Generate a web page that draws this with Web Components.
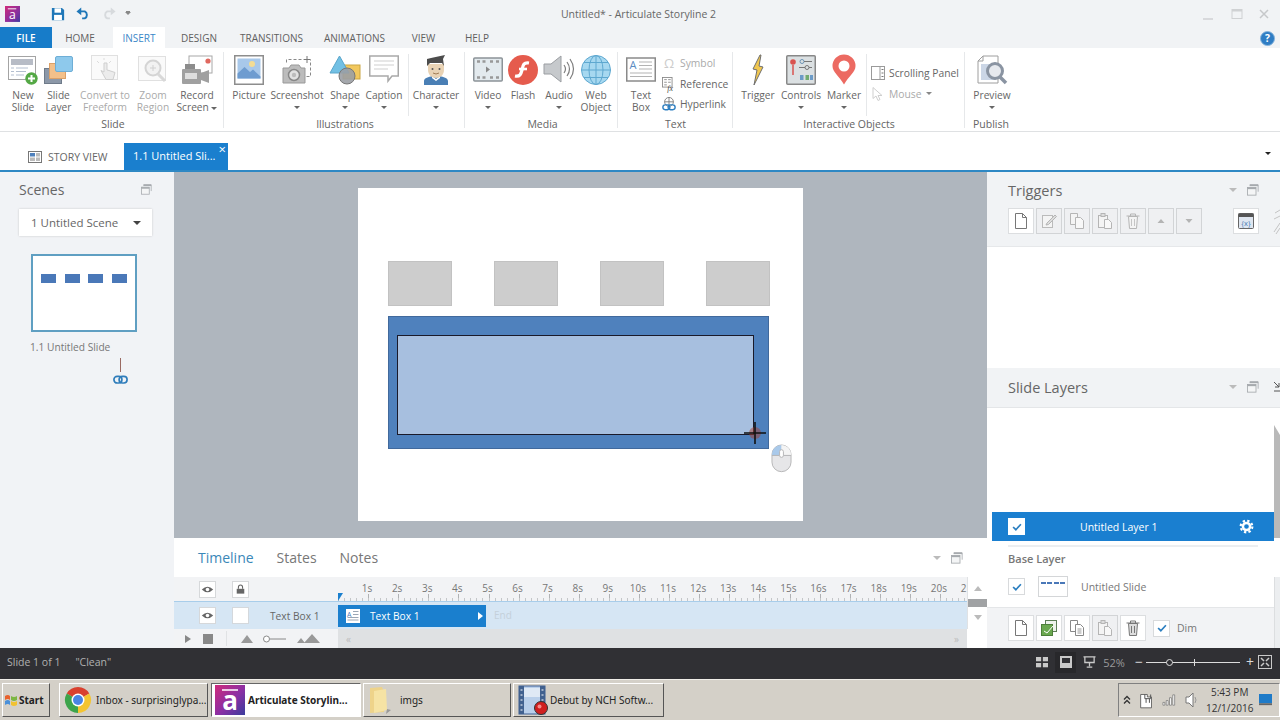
<!DOCTYPE html>
<html lang="en">
<head>
<meta charset="utf-8">
<title>Articulate Storyline 2</title>
<style>
    html, body {
        margin: 0;
        width: 1280px;
        height: 720px;
        overflow: hidden;
        font-family: "Open Sans", "Noto Sans", sans-serif;
        font-size: 11px;
        color: #606060;
    }
</style>
</head>
<body>
<sl-window>
    <sl-titlebar></sl-titlebar>
    <ribbon-tabs></ribbon-tabs>
    <sl-ribbon>
        <ribbon-group label="Slide" w="224" pad="5" lx="2">
            <ribbon-btn w="36" icon="newSlide">New<br>Slide</ribbon-btn>
            <ribbon-btn w="35" icon="slideLayer">Slide<br>Layer</ribbon-btn>
            <ribbon-btn w="58" icon="convert" off>Convert to<br>Freeform</ribbon-btn>
            <ribbon-btn w="38" icon="zoomRegion" off>Zoom<br>Region</ribbon-btn>
            <ribbon-btn w="50" icon="record">Record<br>Screen <b class="tri"></b></ribbon-btn>
        </ribbon-group>
        <ribbon-group label="Illustrations" w="241" pad="6" lx="1">
            <ribbon-btn w="38" icon="picture">Picture</ribbon-btn>
            <ribbon-btn w="58" icon="screenshot" drop>Screenshot</ribbon-btn>
            <ribbon-btn w="38" icon="shape" drop>Shape</ribbon-btn>
            <ribbon-btn w="40" icon="caption" drop>Caption</ribbon-btn>
            <ribbon-sep style="margin-left:4px"></ribbon-sep>
            <ribbon-btn w="54" icon="character" drop>Character</ribbon-btn>
        </ribbon-group>
        <ribbon-group label="Media" w="153" pad="5" lx="2">
            <ribbon-btn w="36" icon="video" drop>Video</ribbon-btn>
            <ribbon-btn w="34" icon="flash">Flash</ribbon-btn>
            <ribbon-btn w="38" icon="audio" drop>Audio</ribbon-btn>
            <ribbon-btn w="36" icon="web">Web<br>Object</ribbon-btn>
        </ribbon-group>
        <ribbon-group label="Text" w="115" pad="5">
            <ribbon-btn w="36" icon="textBox">Text<br>Box</ribbon-btn>
            <ribbon-col top="5" row="20.5" style="margin-left:3px">
                <ribbon-mini icon="symbol" off>Symbol</ribbon-mini>
                <ribbon-mini icon="reference">Reference</ribbon-mini>
                <ribbon-mini icon="hyperlink">Hyperlink</ribbon-mini>
            </ribbon-col>
        </ribbon-group>
        <ribbon-group label="Interactive Objects" w="232" pad="3">
            <ribbon-btn w="44" icon="trigger">Trigger</ribbon-btn>
            <ribbon-btn w="42" icon="controls" drop>Controls</ribbon-btn>
            <ribbon-btn w="44" icon="marker" drop>Marker</ribbon-btn>
            <ribbon-sep></ribbon-sep>
            <ribbon-col top="14" row="21" style="margin-left:4px">
                <ribbon-mini icon="scrolling">Scrolling Panel</ribbon-mini>
                <ribbon-mini icon="mouse" off>Mouse <b class="tri" style="margin-left:5px"></b></ribbon-mini>
            </ribbon-col>
        </ribbon-group>
        <ribbon-group label="Publish" w="52" pad="2" flat>
            <ribbon-btn w="50" icon="preview" drop>Preview</ribbon-btn>
        </ribbon-group>
    </sl-ribbon>
    <doc-tabs></doc-tabs>
    <sl-main>
        <scenes-panel></scenes-panel>
        <sl-center>
            <slide-stage></slide-stage>
            <timeline-panel></timeline-panel>
        </sl-center>
        <side-panel></side-panel>
    </sl-main>
    <status-bar></status-bar>
    <task-bar>
        <task-item w="48" start>Start</task-item>
        <task-item w="149" gap="9" icon="chrome" pad="4" tx="4">Inbox - surprisinglypa...</task-item>
        <task-item w="150" gap="3" icon="artic" pad="3" tx="3" size="30" active>Articulate Storylin...</task-item>
        <task-item w="148" gap="2" icon="folder" pad="4" tx="8" size="30">imgs</task-item>
        <task-item w="151" gap="2" icon="debut" pad="4" tx="2" size="30">Debut by NCH Softw...</task-item>
    </task-bar>
</sl-window>

<script>
// every icon is [viewBox width, viewBox height, markup]
const ICONS = {
    newSlide: [30, 30, '<rect x=".5" y="1.5" width="27" height="23" fill="#fff" stroke="#a4a4a4"/><rect x="3" y="4" width="22" height="6" fill="#b7bcc6"/><path d="M3 13h3M3 16.5h3M3 20h3M8 13h12M8 16.5h10M8 20h8" stroke="#b4bfd0"/><circle cx="23.5" cy="23.5" r="6.2" fill="#54a845"/><path d="M23.5 20v7M20 23.5h7" stroke="#fff" stroke-width="2"/>'],
    slideLayer: [30, 30, '<rect x=".5" y="13.5" width="17" height="15" fill="#8c98a8" stroke="#6f7b8a"/><rect x="5.5" y="8.5" width="16" height="15" fill="#f3c08a" stroke="#dca168"/><rect x="11.5" y="1.5" width="17" height="15" rx="1.5" fill="#8ec9ec" stroke="#6eaed6"/>'],
    convert: [30, 30, '<rect x="1.5" y=".5" width="26" height="24" fill="#fafafa" stroke="#e0e0e0"/><path d="M14 8v9l-3-1.5 5 9h7l2-7-6-2-2-.5V8z" fill="#ececec" stroke="#cfcfcf"/><path d="M7 6l2 2M21 6l-2 2M14 3v2" stroke="#dcdcdc"/>'],
    zoomRegion: [30, 30, '<rect x=".5" y="1.5" width="27" height="24" fill="#fafafa" stroke="#e0e0e0"/><circle cx="15" cy="13" r="7.5" fill="#f2f2f2" stroke="#d4d4d4" stroke-width="2"/><path d="M15 10v6M12 13h6" stroke="#d0d0d0"/><path d="M20 19l7 7" stroke="#d8d8d8" stroke-width="3"/>'],
    record: [32, 30, '<rect x="8" y="1" width="23" height="17" fill="#fff" stroke="#a8a8a8"/><circle cx="27" cy="6" r="2.6" fill="#e0685f"/><rect x="1" y="14" width="19" height="15" rx="1" fill="#a0a0a0"/><rect x="4" y="18" width="12" height="6" fill="#dedede"/><path d="M20 18l8-3v13l-8-3z" fill="#a0a0a0"/><rect x="4" y="9" width="10" height="5" fill="#8c8c8c"/>'],
    picture: [30, 30, '<rect x=".75" y=".75" width="28.5" height="28.5" fill="#fff" stroke="#8d8d8d" stroke-width="1.5"/><rect x="3.5" y="3.5" width="23" height="20" fill="#a8c8ea"/><circle cx="18" cy="9" r="3" fill="#f4dc93"/><path d="M3.5 23.5v-5l7-6.5 5.5 5 3-2.5 7.5 7v2z" fill="#6e9cd0"/>'],
    screenshot: [32, 30, '<path d="M5.5 7.5v-3h24v17h-4" fill="none" stroke="#888" stroke-dasharray="3 2"/><path d="M26 1v7M23 4.500h6" stroke="#777"/><path d="M2 13h6l2-3h8l2 3h4v15H2z" fill="#bcbcbc" stroke="#999"/><circle cx="13" cy="20" r="5.500" fill="#e2e2e2" stroke="#888" stroke-width="1.500"/><circle cx="13" cy="20" r="2.200" fill="#bcbcbc"/>'],
    shape: [30, 30, '<rect x="13" y="10" width="17" height="14" fill="#f2c85e" stroke="#c9a544"/><path d="M9.500 1L19 18H0z" fill="#72c0e4" stroke="#5aa6cb"/><circle cx="17" cy="21" r="8" fill="#9b9fa4" fill-opacity=".9" stroke="#777"/>'],
    caption: [30, 30, '<path d="M.75 1h28.500v20H23l-4 5v-5H.75z" fill="#fff" stroke="#a9a9a9" stroke-width="1.500"/><path d="M5 6h20M5 10h20M5 14h14" stroke="#cfcfcf"/>'],
    character: [30, 30, '<path d="M3 30v-4c0-3 5-4 8-5h8c3 1 8 2 8 5v4z" fill="#4a7fb5"/><path d="M11 21l4 3 4-3v2l-4 3-4-3z" fill="#fff"/><path d="M7 9h16v6c0 5-4 8-8 8s-8-3-8-8z" fill="#e9d3b5"/><path d="M6 11V4l4-1 14-3-2 4 1 7-2-3H9z" fill="#4c4c4c"/><circle cx="11.500" cy="14" r="1" fill="#555"/><circle cx="18.500" cy="14" r="1" fill="#555"/><path d="M12 18q3 2 6 0" stroke="#a27d55" fill="none"/>'],
    video: [30, 30, '<rect x=".75" y="3" width="28.500" height="23" rx="1" fill="#e3eaee" stroke="#8c9398" stroke-width="1.500"/><path d="M4 6.500h3M9.500 6.500h3M17 6.500h3M23 6.500h3M4 22.500h3M9.500 22.500h3M17 22.500h3M23 22.500h3" stroke="#999" stroke-width="2.500"/><path d="M13 11.500l4 3-4 3z" fill="#888"/>'],
    flash: [30, 30, '<circle cx="15" cy="15" r="15" fill="#e55b4d"/><path d="M21 8c-6-1-6 3-7 7s-2 7-7 6" fill="none" stroke="#fff" stroke-width="3.200"/><path d="M11 14h8" stroke="#fff" stroke-width="2.600"/>'],
    audio: [32, 30, '<path d="M1 9h7l10-8v26L8 19H1z" fill="#c6c9cc" stroke="#9b9ea2"/><path d="M21 10q3 4 0 8M24 7q5 7 0 14M27 4q7 10 0 20" fill="none" stroke="#7d7d7d" stroke-width="1.200"/>'],
    web: [30, 30, '<circle cx="15" cy="15" r="14.500" fill="#a6d8f0" stroke="#5ea8d0"/><ellipse cx="15" cy="15" rx="7" ry="14.500" fill="none" stroke="#5ea8d0"/><path d="M15 .5v29M.5 15h29M3 7.500h24M3 22.500h24" stroke="#5ea8d0" fill="none"/>'],
    textBox: [30, 30, '<rect x=".75" y="3" width="28.500" height="23" fill="#fff" stroke="#8a8a8a" stroke-width="1.500"/><text x="3.500" y="14" font-size="11" font-family="Open Sans" fill="#5b8cc2">A</text><path d="M13 7h13M13 10.500h13M13 14h13M4 18h22M4 21.500h22" stroke="#b3b3b3"/>'],
    trigger: [30, 30, '<path d="M17 0l-7 14 4 1-3 15 9-18-4-1 2-11z" fill="#f1c74f" stroke="#6f6f6f"/>'],
    controls: [30, 30, '<rect x=".75" y=".75" width="28.500" height="28.500" rx="1" fill="#dbe0e2" stroke="#888" stroke-width="1.500"/><circle cx="7" cy="7" r="2.800" fill="#d9534f"/><path d="M7 10v10" stroke="#d9534f" stroke-width="1.500"/><circle cx="16" cy="6.500" r="2" fill="none" stroke="#6b93b4"/><path d="M18 6.500h8M13 12.500h13" stroke="#777"/><circle cx="21" cy="12.500" r="2" fill="#dbe0e2" stroke="#777"/><rect x="14" y="20" width="3.500" height="5" fill="#6c9bc7"/><rect x="19.500" y="20" width="3.500" height="5" fill="#72ab70"/><rect x="24" y="20" width="3" height="5" fill="#6c9bc7"/>'],
    marker: [24, 30, '<path d="M12 29.500C7 21 .5 17 .5 11a11.500 11.500 0 0 1 23 0c0 6-6.500 10-11.500 18.500z" fill="#ec6a62"/><circle cx="12" cy="11" r="5.500" fill="#fff"/>'],
    preview: [30, 30, '<path d="M1 6l5-5h15v27H1z" fill="#fff" stroke="#9e9e9e"/><path d="M1 6h5V1" fill="none" stroke="#9e9e9e"/><rect x="4" y="9" width="15" height="16" fill="#cbd6e6"/><circle cx="18" cy="16" r="7.500" fill="#e6e9ee" stroke="#8a94a2" stroke-width="3"/><path d="M23 22l6 6" stroke="#8a94a2" stroke-width="3.500"/>'],
    reference: [16, 16, '<rect x=".5" y=".5" width="11" height="11" fill="#fff" stroke="#888"/><path d="M2.500 3h3M7 3h3M2.500 6h3M7 6h3M2.500 9h3" stroke="#888"/><text x="6" y="15.500" font-size="9" font-style="italic" font-family="Liberation Serif" fill="#444">fx</text>'],
    hyperlink: [16, 16, '<circle cx="8" cy="5.500" r="5" fill="#fff" stroke="#777"/><path d="M3 5.500h10M8 .5v10" stroke="#777"/><rect x="1" y="9" width="8" height="5.500" rx="2.700" fill="none" stroke="#2e7fc1" stroke-width="1.600"/><rect x="7" y="9" width="8" height="5.500" rx="2.700" fill="none" stroke="#2e7fc1" stroke-width="1.600"/>'],
    scrolling: [14, 14, '<rect x=".5" y=".5" width="13" height="13" fill="#fff" stroke="#9a9a9a"/><path d="M9 .5v13" stroke="#9a9a9a"/><path d="M10.500 3.500h2M10.500 7h2M10.500 10.500h2" stroke="#777"/>'],
    mouse: [12, 14, '<path d="M1 .5v11l3-2.500 2 4.500 2-1-2-4h4z" fill="#fff" stroke="#cfcfcf"/>'],
    restore: [14, 14, '<path d="M3.500 1h9.500v8" fill="none" stroke="#a6aaae"/><rect x="3" y=".5" width="10" height="2" fill="#a6aaae"/><rect x=".5" y="4" width="10" height="9" fill="#f4f5f6" stroke="#a6aaae"/><rect x=".5" y="4" width="10" height="2" fill="#a6aaae"/>'],
    doc: [16, 16, '<path d="M2.500 .5h7l4 4v11h-11z" fill="#fff" stroke="#777"/><path d="M9.500 .5v4h4" fill="none" stroke="#777"/>'],
    edit: [16, 16, '<rect x="1.500" y="2.500" width="10" height="12" fill="#f4f4f4" stroke="#bbb"/><path d="M6 10l8-8 1.500 1.500-8 8L5 12z" fill="#ddd" stroke="#b5b5b5"/>'],
    copy: [16, 16, '<path d="M1.500 .5h7v11h-7z" fill="#f4f4f4" stroke="#b5b5b5"/><path d="M6.500 4.500h5l3 3v8h-8z" fill="#f8f8f8" stroke="#b5b5b5"/>'],
    copyOn: [16, 16, '<path d="M1.500 .5h7v11h-7z" fill="#fff" stroke="#888"/><path d="M6.500 4.500h5l3 3v8h-8z" fill="#fff" stroke="#888"/><path d="M8.500 9h4M8.500 11h4M8.500 13h4" stroke="#999"/>'],
    paste: [16, 16, '<rect x="1.500" y="2.500" width="9" height="12" fill="#f4f4f4" stroke="#b5b5b5"/><rect x="4" y=".5" width="4" height="3" fill="#ddd" stroke="#b5b5b5"/><path d="M7.500 6.500h4l3 3v6h-7z" fill="#f8f8f8" stroke="#b5b5b5"/>'],
    trash: [16, 16, '<path d="M1.500 3h13M5.500 3V1h5v2" fill="none" stroke="#b5b5b5"/><path d="M3.500 3.500l1 12h7l1-12z" fill="#f4f4f4" stroke="#b5b5b5"/><path d="M6.500 6v7M9.500 6v7" stroke="#c5c5c5"/>'],
    trashOn: [16, 16, '<path d="M1.500 3h13M5.500 3V1h5v2" fill="none" stroke="#777"/><path d="M3.500 3.500l1 12h7l1-12z" fill="#ddd" stroke="#777"/><path d="M6.500 6v7M9.500 6v7" stroke="#777"/>'],
    dup: [16, 16, '<rect x="4.500" y=".5" width="11" height="11" fill="#eef3ec" stroke="#5e7f57"/><rect x=".5" y="4.500" width="11" height="11" fill="#6aa84f" stroke="#4d7f3a"/><path d="M3 11l3 2 6-7" stroke="#fff" fill="none"/>'],
    arrowUp: [16, 16, '<path d="M4.500 10l3.500-4 3.500 4z" fill="#b4b4b4"/>'],
    arrowDown: [16, 16, '<path d="M4.500 6l3.500 4 3.500-4z" fill="#b4b4b4"/>'],
    vars: [16, 16, '<rect x=".5" y=".5" width="15" height="15" rx="1" fill="#dfe6f0" stroke="#666"/><rect x=".5" y=".5" width="15" height="3.500" fill="#555"/><text x="8" y="12.500" font-size="7.500" text-anchor="middle" font-family="Open Sans" fill="#4a7fb5">{x}</text>'],
    cut: [6, 26, '<path d="M1 5l5-3M0 11l6-3M0 24l6-9M2 26l4-6" stroke="#c4c4c4"/>'],
    pin: [6, 12, '<path d="M0 1l5 5M5 2v4H1M0 10h6" fill="none" stroke="#555"/>'],
    eye: [16, 16, '<path d="M1 8q7-7 14 0q-7 7-14 0z" fill="#666"/><circle cx="8" cy="8" r="2.200" fill="#fff"/>'],
    lock: [16, 16, '<rect x="2.500" y="7" width="11" height="7" fill="#666"/><path d="M5 7V4.500a3 3 0 0 1 6 0V7" fill="none" stroke="#666" stroke-width="1.600"/>'],
    gear: [18, 18, '<circle cx="9" cy="9" r="4.300" fill="none" stroke="#fff" stroke-width="3"/><circle cx="9" cy="9" r="7" fill="none" stroke="#fff" stroke-width="2.600" stroke-dasharray="2.800 2.700"/>'],
    check: [18, 18, '<path d="M4 9l3.500 3.500L14 5.500" fill="none" stroke="#2c7fc0" stroke-width="2.200"/>'],
    link: [16, 10, '<rect x="1" y="1.500" width="8.500" height="7" rx="3.400" fill="none" stroke="#2f7dbb" stroke-width="1.800"/><rect x="6.500" y="1.500" width="8.500" height="7" rx="3.400" fill="none" stroke="#2f7dbb" stroke-width="1.800"/>'],
    storyView: [14, 12, '<rect x=".5" y=".5" width="13" height="11" fill="#fff" stroke="#777"/><rect x="2" y="2" width="5" height="3.500" fill="#4f81bd"/><rect x="8" y="2" width="4" height="3.500" fill="#bbb"/><rect x="2" y="6.500" width="5" height="3.500" fill="#bbb"/><rect x="8" y="6.500" width="4" height="3.500" fill="#bbb"/>'],
    textItem: [14, 14, '<rect width="14" height="14" fill="#fff"/><text x="1" y="7.500" font-size="7" font-family="Open Sans" fill="#4f81bd">A</text><path d="M7 2.500h5.500M7 5.500h5.500M1.500 8.500h11M1.500 11h11" stroke="#9aa7b5"/>'],
    save: [16, 16, '<path d="M1 1h11.500L15 3.500V15H1z" fill="#1f77b8"/><rect x="4" y="1.500" width="7.500" height="5" fill="#fff"/><rect x="3.500" y="9" width="9" height="6" fill="#fff"/>'],
    undo: [16, 14, '<path d="M4 5h6a4.500 4.500 0 0 1 0 8H7" fill="none" stroke="#1f77b8" stroke-width="2.200"/><path d="M6 .5v9L.5 5z" fill="#1f77b8"/>'],
    redo: [16, 14, '<path d="M12 5H6a4.500 4.500 0 0 0 0 8h3" fill="none" stroke="#d7dadd" stroke-width="2.200"/><path d="M10 .5v9L15.500 5z" fill="#d7dadd"/>'],
    minimize: [12, 12, '<path d="M1 11h10" stroke="#cfd1d3" stroke-width="1.500"/>'],
    maximize: [12, 12, '<rect x="1" y="1.500" width="10" height="9" fill="none" stroke="#cfd1d3"/><path d="M1 2.500h10" stroke="#cfd1d3" stroke-width="2"/>'],
    close: [12, 12, '<path d="M2 2l8 8M10 2l-8 8" stroke="#c6c8ca" stroke-width="1.500"/>'],
    help: [16, 16, '<circle cx="8" cy="8" r="7.500" fill="#2f7dc4"/><circle cx="8" cy="8" r="7.500" fill="none" stroke="#86b4dc"/><text x="8" y="12" text-anchor="middle" font-size="11" font-weight="700" font-family="Open Sans" fill="#fff">?</text>'],
    appLogo: [16, 17, '<defs><linearGradient id="lg" x1="0" y1="0" x2="1" y2="1"><stop offset="0" stop-color="#d02a7a"/><stop offset=".6" stop-color="#8a2f9e"/><stop offset="1" stop-color="#3f3aa0"/></linearGradient></defs><rect width="16" height="17" fill="url(#lg)"/><path d="M3 3h9" stroke="#fff"/><text x="8" y="14" text-anchor="middle" font-size="13" font-family="Open Sans" fill="#fff">a</text>'],
    chrome: [28, 28, '<path d="M14 14L2.740 7.500A13 13 0 0 1 25.260 7.500z" fill="#d9412f"/><path d="M14 14L25.260 7.500A13 13 0 0 1 14 27z" fill="#f4c430"/><path d="M14 14L14 27A13 13 0 0 1 2.740 7.500z" fill="#3da44b"/><circle cx="14" cy="14" r="6.500" fill="#fff"/><circle cx="14" cy="14" r="5" fill="#4a85e4"/>'],
    artic: [30, 30, '<defs><linearGradient id="la" x1="0" y1="0" x2="1" y2="1"><stop offset="0" stop-color="#d02a7a"/><stop offset=".55" stop-color="#8a2fa5"/><stop offset="1" stop-color="#3a3d9c"/></linearGradient></defs><rect width="30" height="30" fill="url(#la)"/><path d="M7 5h16" stroke="#fff" stroke-width="1.500"/><text x="15" y="25" text-anchor="middle" font-size="26" font-family="Open Sans" fill="#fff">a</text>'],
    folder: [24, 30, '<path d="M2 3l12-1 2 5v20l-14 1z" fill="#eed38a"/><path d="M6 6l12-2 1 21-13 3z" fill="#f6e3a4"/><path d="M19 24l4 1-5 4z" fill="#9a9a9a"/>'],
    debut: [30, 30, '<rect x="1" y="1" width="26" height="28" fill="#b9cfea" stroke="#3d5f94"/><rect x="1" y="1" width="5" height="28" fill="#41618f"/><rect x="22" y="1" width="5" height="28" fill="#41618f"/><path d="M2.500 5h2M2.500 10h2M2.500 15h2M2.500 20h2M2.500 25h2M23.500 5h2M23.500 10h2M23.500 15h2" stroke="#fff"/><path d="M6 3h16v9H6z" fill="#dfe9f5"/><circle cx="23" cy="23" r="6.500" fill="#d01f1f" stroke="#333"/><circle cx="21.500" cy="21.500" r="2" fill="#f68a8a"/>'],
    startFlag: [14, 14, '<path d="M1 3q3-2 5 0v4q-2-2-5 0z" fill="#e8622d"/><path d="M7 3q3 2 6 0v4q-3 2-6 0z" fill="#7db743"/><path d="M1 8q3-2 5 0v4q-2-2-5 0z" fill="#4a90d9"/><path d="M7 8q3 2 6 0v4q-3 2-6 0z" fill="#f1c232"/>'],
    chevrons: [8, 10, '<path d="M1 4.500l3-3 3 3M1 8.500l3-3 3 3" fill="none" stroke="#333" stroke-width="1.300"/>'],
    plug: [18, 20, '<path d="M2 3h8v3h5v13H2z" fill="#fff" stroke="#555"/><path d="M7 3v5h7V3M8.500 8v5M12.500 8v5" fill="none" stroke="#555" stroke-width="1.200"/>'],
    signal: [16, 14, '<path d="M1 13h2v-3H1zM4.500 13h2V8h-2zM8 13h2V5H8zM11.500 13h2V2h-2z" fill="#fff" stroke="#777" stroke-width=".8"/>'],
    speaker: [12, 16, '<path d="M1 5h3l4-4v14l-4-4H1z" fill="#fff" stroke="#777"/><path d="M10 5q2 3 0 6" fill="none" stroke="#999"/>'],
    desktop: [14, 14, '<rect width="14" height="10" fill="#1f7bc8"/><rect y="10" width="14" height="2" fill="#666"/>'],
    gridView: [14, 12, '<rect width="6" height="5" fill="#c9c9c9"/><rect x="8" width="6" height="5" fill="#c9c9c9"/><rect y="7" width="6" height="5" fill="#c9c9c9"/><rect x="8" y="7" width="6" height="5" fill="#c9c9c9"/>'],
    slideView: [12, 12, '<rect width="12" height="12" fill="#c9c9c9"/><rect x="2" y="2" width="8" height="5" fill="#303034"/>'],
    present: [14, 13, '<path d="M.5 1h13M2 1v6h10V1M7 7v4M4 12h6" fill="none" stroke="#c9c9c9" stroke-width="1.400"/>'],
    fit: [14, 14, '<rect x=".5" y=".5" width="13" height="13" fill="none" stroke="#c9c9c9"/><path d="M3 3l3 3M11 3L8 6M3 11l3-3M11 11L8 8" stroke="#c9c9c9" stroke-width="1.500"/>'],
    mouseHint: [22, 30, '<rect x="1" y="1" width="20" height="28" rx="10" fill="#e6e6e8" stroke="#b4b4b6"/><path d="M11 1A10 10 0 0 0 1 11v1h10z" fill="#a9c9ea"/><path d="M11 1A10 10 0 0 1 21 11v1H11z" fill="#f4f4f4"/><path d="M1 12h20" stroke="#b4b4b6"/><rect x="9" y="6" width="4" height="8" rx="2" fill="#fff" stroke="#b4b4b6"/>'],
    crosshair: [28, 28, '<circle cx="14" cy="14" r="6" fill="#a84030" fill-opacity=".5"/><path d="M14 3v22M3 14h22" stroke="#111" stroke-width="1.600"/>']
}

customElements.define('ui-icon',
    class extends HTMLElement {
        connectedCallback () {
            const [vw, vh, body] = ICONS[this.getAttribute('name')]
            const w = this.getAttribute('w') || vw
            const h = this.getAttribute('h') || (w * vh / vw)
            if (!this.shadowRoot) this.attachShadow({ mode: 'open' })
            this.shadowRoot.innerHTML = `
                <style>
                    :host { display: inline-flex; flex: none; }
                    svg { display: block; overflow: visible; }
                </style>
                <svg xmlns="http://www.w3.org/2000/svg" width="${w}" height="${h}" viewBox="0 0 ${vw} ${vh}">${body}</svg>`
        }
    }
)

customElements.define('sl-window',
    class extends HTMLElement {
        constructor () {
            super()
            this.attachShadow({ mode: 'open' }).innerHTML = `
                <style>
                    :host { display: flex; flex-direction: column; width: 1280px; height: 720px; background: #fff; }
                </style>
                <slot></slot>`
        }
    }
)

customElements.define('sl-titlebar',
    class extends HTMLElement {
        constructor () {
            super()
            this.attachShadow({ mode: 'open' }).innerHTML = `
                <style>
                    :host { display: grid; grid-template-columns: 1fr auto 1fr; height: 27px; background: #f1f3f5; align-items: center; }
                    .left { display: flex; align-items: center; padding-left: 5px; }
                    .right { display: flex; align-items: center; justify-content: flex-end; padding: 0 10px 0 0; }
                    .title { font-size: 10.500px; color: #666; margin-right: 3px; }
                    .cust { width: 0; height: 0; border: 3px solid transparent; border-top-color: #888; border-bottom: 0; margin-left: 10px; box-shadow: 0 -2px 0 -1px #888; }
                </style>
                <div class="left">
                    <ui-icon name="appLogo" w="15"></ui-icon>
                    <ui-icon name="save" w="14" style="margin-left:31px"></ui-icon>
                    <ui-icon name="undo" w="14" style="margin-left:11px"></ui-icon>
                    <ui-icon name="redo" w="14" style="margin-left:12px"></ui-icon>
                    <span class="cust" style="margin-left:9px"></span>
                </div>
                <div class="title">Untitled* -  Articulate Storyline 2</div>
                <div class="right">
                    <ui-icon name="minimize"></ui-icon>
                    <ui-icon name="maximize" style="margin-left:17px"></ui-icon>
                    <ui-icon name="close" style="margin-left:15px"></ui-icon>
                </div>`
        }
    }
)

customElements.define('ribbon-tabs',
    class extends HTMLElement {
        constructor () {
            super()
            const tabs = [['HOME', 56], ['INSERT', 52, 5], ['DESIGN', 68], ['TRANSITIONS', 77], ['ANIMATIONS', 89], ['VIEW', 49], ['HELP', 58]]
            const html = tabs.map(([t, w, m]) => `<div class="tab ${t === 'INSERT' ? 'on' : ''}" style="width:${w}px;margin-left:${m || 0}px">${t}</div>`).join('')
            this.attachShadow({ mode: 'open' }).innerHTML = `
                <style>
                    :host { display: flex; height: 21px; background: #f1f3f5; font-size: 10px; color: #606060; }
                    .tab { display: flex; align-items: center; justify-content: center; }
                    .tab.on { background: #fff; color: #3a87c8; }
                    .file { width: 52px; display: flex; align-items: center; justify-content: center; background: #177cc9; color: #fff; font-weight: 600; }
                    ui-icon { margin: 4px 5px 0 auto; }
                </style>
                <div class="file">FILE</div>${html}
                <ui-icon name="help" w="15"></ui-icon>`
        }
    }
)

customElements.define('sl-ribbon',
    class extends HTMLElement {
        constructor () {
            super()
            this.attachShadow({ mode: 'open' }).innerHTML = `
                <style>
                    :host { display: flex; height: 84px; background: #fff; box-sizing: border-box; border-bottom: 1px solid #dfe1e3; }
                </style>
                <slot></slot>`
        }
    }
)

customElements.define('ribbon-group',
    class extends HTMLElement {
        constructor () {
            super()
            const flat = this.hasAttribute('flat')
            this.attachShadow({ mode: 'open' }).innerHTML = `
                <style>
                    :host { display: flex; flex-direction: column; box-sizing: border-box; width: ${this.getAttribute('w')}px; flex: none; position: relative; }
                    :host::after { content: ""; position: absolute; right: 0; top: 4px; bottom: 3px; width: 1px; background: ${flat ? 'transparent' : '#e6e8ea'}; }
                    .row { display: flex; height: 69px; padding-left: ${this.getAttribute('pad')}px; }
                    .label { height: 14px; line-height: 14px; text-align: center; font-size: 10.500px; color: #646464; padding-left: ${this.getAttribute('lx') || 0}px; }
                </style>
                <div class="row"><slot></slot></div>
                <div class="label">${this.getAttribute('label')}</div>`
        }
    }
)

customElements.define('ribbon-btn',
    class extends HTMLElement {
        constructor () {
            super()
            const off = this.hasAttribute('off')
            const drop = this.hasAttribute('drop')
            this.attachShadow({ mode: 'open' }).innerHTML = `
                <style>
                    :host { display: flex; flex-direction: column; align-items: center; flex: none; width: ${this.getAttribute('w')}px; padding-top: 7px; box-sizing: border-box; }
                    .ico { height: 30px; display: flex; align-items: center; justify-content: center; }
                    .txt { margin-top: 4px; font-size: 10.200px; line-height: 12px; text-align: center; white-space: nowrap; color: ${off ? '#aaa' : '#666'}; }
                    .tri { display: block; width: 0; height: 0; border: 3px solid transparent; border-top-color: #666; border-bottom: 0; margin-top: 5px; }
                    ::slotted(b) { display: inline-block; width: 0; height: 0; border: 3px solid transparent; border-top-color: #666; border-bottom: 0; vertical-align: 1px; }
                </style>
                <div class="ico"><ui-icon name="${this.getAttribute('icon')}" h="30" w="${ICONS[this.getAttribute('icon')][0]}"></ui-icon></div>
                <div class="txt"><slot></slot></div>
                ${drop ? '<span class="tri"></span>' : ''}`
        }
    }
)

customElements.define('ribbon-sep',
    class extends HTMLElement {
        constructor () {
            super()
            this.attachShadow({ mode: 'open' }).innerHTML = `
                <style>
                    :host { display: block; flex: none; width: 1px; height: 62px; margin-top: 6px; background: #e6e8ea; }
                </style>`
        }
    }
)

customElements.define('ribbon-col',
    class extends HTMLElement {
        constructor () {
            super()
            this.attachShadow({ mode: 'open' }).innerHTML = `
                <style>
                    :host { display: grid; grid-auto-rows: ${this.getAttribute('row')}px; align-content: start; padding-top: ${this.getAttribute('top')}px; }
                </style>
                <slot></slot>`
        }
    }
)

customElements.define('ribbon-mini',
    class extends HTMLElement {
        constructor () {
            super()
            const name = this.getAttribute('icon')
            const glyph = name === 'symbol'
                ? '<span class="omega">Ω</span>'
                : `<ui-icon name="${name}" w="${name === 'mouse' ? 12 : 14}"></ui-icon>`
            const off = this.hasAttribute('off')
            this.attachShadow({ mode: 'open' }).innerHTML = `
                <style>
                    :host { display: flex; align-items: center; white-space: nowrap; font-size: 10.300px; color: ${off ? '#aaa' : '#666'}; }
                    .slot { width: 14px; display: flex; justify-content: center; margin-right: 4px; }
                    .omega { font-size: 13px; line-height: 14px; color: #ccc; }
                    ::slotted(b) { display: inline-block; width: 0; height: 0; border: 3px solid transparent; border-top-color: #888; border-bottom: 0; vertical-align: 1px; }
                </style>
                <span class="slot">${glyph}</span><slot></slot>`
        }
    }
)

customElements.define('doc-tabs',
    class extends HTMLElement {
        constructor () {
            super()
            this.attachShadow({ mode: 'open' }).innerHTML = `
                <style>
                    :host { display: flex; align-items: flex-end; height: 40px; background: #fff; box-sizing: border-box; border-bottom: 2px solid #2e88c4; position: relative; }
                    .story { display: flex; align-items: center; width: 124px; height: 27px; box-sizing: border-box; padding-left: 28px; gap: 6px; font-size: 10.500px; color: #666; }
                    .tab { width: 104px; height: 27px; box-sizing: border-box; padding-left: 9px; background: #1a7fce; color: #fff; font-size: 11px; line-height: 26px; position: relative; }
                    .x { position: absolute; right: 2px; top: 0; font-size: 13px; line-height: 12px; }
                    .more { position: absolute; right: 9px; top: 20px; width: 0; height: 0; border: 3px solid transparent; border-top-color: #222; border-bottom: 0; }
                </style>
                <div class="story"><ui-icon name="storyView"></ui-icon>STORY VIEW</div>
                <div class="tab">1.1 Untitled Sli...<span class="x">×</span></div>
                <span class="more"></span>`
        }
    }
)

customElements.define('sl-main',
    class extends HTMLElement {
        constructor () {
            super()
            this.attachShadow({ mode: 'open' }).innerHTML = `
                <style>
                    :host { display: flex; height: 476px; }
                </style>
                <slot></slot>`
        }
    }
)

customElements.define('sl-center',
    class extends HTMLElement {
        constructor () {
            super()
            this.attachShadow({ mode: 'open' }).innerHTML = `
                <style>
                    :host { display: flex; flex-direction: column; width: 813px; flex: none; }
                </style>
                <slot></slot>`
        }
    }
)

customElements.define('scenes-panel',
    class extends HTMLElement {
        constructor () {
            super()
            this.attachShadow({ mode: 'open' }).innerHTML = `
                <style>
                    :host { display: block; width: 174px; flex: none; box-sizing: border-box; background: #f1f3f6; padding: 8px 22px 0 19px; }
                    .head { display: flex; justify-content: space-between; align-items: center; height: 18px; font-size: 14px; color: #666; }
                    .select { display: flex; justify-content: space-between; align-items: center; box-sizing: border-box; width: 133px; height: 27px; margin-top: 11px; padding: 0 11px 0 12px; background: #fff; box-shadow: 0 0 2px #c8c8c8; font-size: 11.500px; color: #666; }
                    .select i { width: 0; height: 0; border: 4px solid transparent; border-top-color: #444; border-bottom: 0; }
                    .thumb { display: flex; justify-content: space-between; box-sizing: border-box; width: 106px; height: 78px; margin: 18px 0 0 12px; padding: 18px 8px 0 8px; background: #fff; border: 2px solid #5f9fc2; }
                    .thumb i { width: 15px; height: 9px; background: #4a78b8; }
                    .name { margin: 9px 0 0 11px; font-size: 10.200px; line-height: 13px; color: #777; }
                    .wire { width: 1px; height: 14px; margin: 4px 0 0 101px; background: #9a6a62; }
                    .link { display: flex; margin: 3px 0 0 94px; }
                </style>
                <div class="head">Scenes<ui-icon name="restore" w="11"></ui-icon></div>
                <div class="select">1 Untitled Scene<i></i></div>
                <div class="thumb"><i></i><i></i><i></i><i></i></div>
                <div class="name">1.1 Untitled Slide</div>
                <div class="wire"></div>
                <div class="link"><ui-icon name="link" w="15"></ui-icon></div>`
        }
    }
)

customElements.define('slide-stage',
    class extends HTMLElement {
        constructor () {
            super()
            this.attachShadow({ mode: 'open' }).innerHTML = `
                <style>
                    :host { display: flex; align-items: center; justify-content: center; height: 366px; box-sizing: border-box; padding-bottom: 1px; flex: none; background: #afb6be; }
                    .slide { position: relative; width: 445px; height: 333px; background: #fff; }
                    .ph { position: absolute; top: 73px; width: 64px; height: 45px; box-sizing: border-box; background: #cdcdcd; border: 1px solid #c2c2c2; }
                    .blue { position: absolute; left: 30px; top: 128px; width: 381px; height: 133px; box-sizing: border-box; background: #4f81bd; border: 1px solid #41699c; }
                    .inner { position: absolute; left: 39px; top: 147px; width: 357px; height: 100px; box-sizing: border-box; background: #a7bfdf; border: 1px solid #1a1a2a; }
                    .cross { position: absolute; left: 383px; top: 231px; }
                    .hint { position: absolute; left: 413px; top: 256px; }
                </style>
                <div class="slide">
                    <div class="ph" style="left:30px"></div>
                    <div class="ph" style="left:136px"></div>
                    <div class="ph" style="left:242px"></div>
                    <div class="ph" style="left:348px"></div>
                    <div class="blue"></div>
                    <div class="inner"></div>
                    <ui-icon class="cross" name="crosshair"></ui-icon>
                    <ui-icon class="hint" name="mouseHint" w="21"></ui-icon>
                </div>`
        }
    }
)

customElements.define('timeline-panel',
    class extends HTMLElement {
        constructor () {
            super()
            let labels = ''
            for (let s = 1; s <= 21; s++) labels += `<span>${s}s</span>`
            this.attachShadow({ mode: 'open' }).innerHTML = `
                <style>
                    :host { display: flex; flex-direction: column; height: 110px; flex: none; background: #fff; overflow: hidden; }
                    .head { display: flex; align-items: center; height: 39px; padding: 0 24px 0 24px; font-size: 14px; color: #777; }
                    .head .on { color: #3a87b8; }
                    .head span { margin-right: 23px; }
                    .head i { margin-left: auto; width: 0; height: 0; border: 4px solid transparent; border-top-color: #bbb; border-bottom: 0; }
                    .head ui-icon { margin-left: 10px; }
                    .grid { display: grid; grid-template-columns: 164px 629px 20px; grid-template-rows: 25px 27px 19px; }
                    .cell { display: flex; align-items: center; }
                    .bt { display: flex; align-items: center; justify-content: center; box-sizing: border-box; width: 17px; height: 17px; background: #fff; border: 1px solid #d6d8da; }
                    .a { background: #f2f3f5; padding-left: 25px; gap: 16px; border-bottom: 1px solid #a8cdea; }
                    .ruler { position: relative; background: #f2f3f5; border-bottom: 1px solid #a8cdea; overflow: hidden;
                        --t: repeating-linear-gradient(90deg, #c4c6c8 0 1px, transparent 1px 6.020px);
                        --m: repeating-linear-gradient(90deg, #b0b2b4 0 1px, transparent 1px 30.100px); }
                    .ruler::after { content: ""; position: absolute; left: 0; right: 0; bottom: 0; height: 7px; background: var(--m); }
                    .ruler::before { content: ""; position: absolute; left: 0; right: 0; bottom: 0; height: 3px; background: var(--t); z-index: 1; }
                    .labels { display: flex; position: absolute; left: 14px; top: 5px; font-size: 10px; line-height: 12px; color: #777; }
                    .labels span { width: 30.100px; flex: none; text-align: center; }
                    .play { position: absolute; left: -5px; bottom: 0; width: 0; height: 0; border: 5px solid transparent; border-top: 8px solid #1a7fce; border-bottom: 0; z-index: 2; }
                    .vs { background: #fff; border-left: 1px solid #e0e2e4; flex-direction: column; justify-content: center; }
                    .b { background: #d6e6f4; padding-left: 25px; gap: 16px; }
                    .b .name { margin-left: 5px; font-size: 10.200px; color: #666; }
                    .bt2 { box-sizing: border-box; width: 17px; height: 17px; background: #fff; border: 1px solid #d4d8dc; }
                    .track { position: relative; background: #d6e6f4; }
                    .bar { position: absolute; left: 0; top: 3px; display: flex; align-items: center; box-sizing: border-box; width: 148px; height: 22px; padding: 0 3px 0 8px; background: #1a7fce; color: #fff; font-size: 10.200px; }
                    .bar .t { margin-left: 10px; }
                    .bar i { margin-left: auto; width: 0; height: 0; border: 4px solid transparent; border-left: 5px solid #fff; border-right: 0; }
                    .end { position: absolute; left: 156px; top: 6px; font-size: 10px; color: #c4d0da; }
                    .c { background: #f2f3f5; padding-left: 11px; }
                    .c .play2 { width: 0; height: 0; border: 4px solid transparent; border-left: 6px solid #888; border-right: 0; }
                    .c .stop { width: 10px; height: 10px; background: #888; margin-left: 12px; }
                    .c .sep { width: 1px; height: 15px; background: #e0e2e4; margin-left: 13px; }
                    .c svg { margin-left: 14px; }
                    .sb { background: #dfe1e3; justify-content: space-between; padding: 0 8px; font-size: 10px; color: #bbb; }
                    .corner { background: #fff; }
                    .tri { width: 0; height: 0; border: 4px solid transparent; }
                    .thumb { width: 100%; height: 8px; background: #a0a2a4; margin: 0; }
                    .up { border-bottom: 5px solid #bbb; border-top: 0; margin-bottom: 8px; }
                    .down { border-top: 5px solid #bbb; border-bottom: 0; margin-top: 8px; }
                    .vspan { grid-row: 1 / span 2; grid-column: 3; }
                </style>
                <div class="head"><span class="on">Timeline</span><span>States</span><span>Notes</span><i></i><ui-icon name="restore" w="12"></ui-icon></div>
                <div class="grid">
                    <div class="cell a">
                        <div class="bt"><ui-icon name="eye" w="13"></ui-icon></div>
                        <div class="bt"><ui-icon name="lock" w="11"></ui-icon></div>
                    </div>
                    <div class="ruler">
                        <div class="labels">${labels}</div>
                        <span class="play"></span>
                    </div>
                    <div class="cell vs vspan">
                        <span class="tri up"></span><span class="thumb"></span><span class="tri down"></span>
                    </div>
                    <div class="cell b">
                        <div class="bt"><ui-icon name="eye" w="13"></ui-icon></div>
                        <div class="bt2"></div>
                        <span class="name">Text Box 1</span>
                    </div>
                    <div class="track">
                        <div class="bar"><ui-icon name="textItem"></ui-icon><span class="t">Text Box 1</span><i></i></div>
                        <span class="end">End</span>
                    </div>
                    <div class="cell c">
                        <span class="play2"></span><span class="stop"></span><span class="sep"></span>
                        <svg width="12" height="8" viewBox="0 0 12 8"><path d="M6 0l6 8H0z" fill="#999"/></svg>
                        <svg width="24" height="8" viewBox="0 0 24 8" style="margin-left:10px"><circle cx="3.500" cy="4" r="3" fill="#fff" stroke="#888"/><path d="M7 4h16" stroke="#888"/></svg>
                        <svg width="24" height="9" viewBox="0 0 24 9" style="margin-left:10px"><path d="M0 9l4-5 4 5zM7 9l8-9 8 9z" fill="#999"/></svg>
                    </div>
                    <div class="cell sb"><span>«</span><span>»</span></div>
                    <div class="corner"></div>
                </div>`
        }
    }
)

customElements.define('tool-btn',
    class extends HTMLElement {
        constructor () {
            super()
            const off = this.hasAttribute('off')
            this.attachShadow({ mode: 'open' }).innerHTML = `
                <style>
                    :host { display: flex; align-items: center; justify-content: center; flex: none; box-sizing: border-box; width: 26px; height: 26px; border: 1px solid ${off ? '#d2d4d6' : '#dcdee0'}; background: ${off ? '#eff0f2' : '#fff'}; }
                </style>
                <ui-icon name="${this.getAttribute('icon')}"></ui-icon>`
        }
    }
)

customElements.define('check-box',
    class extends HTMLElement {
        constructor () {
            super()
            this.attachShadow({ mode: 'open' }).innerHTML = `
                <style>
                    :host { display: flex; align-items: center; justify-content: center; flex: none; box-sizing: border-box; width: 17px; height: 17px; background: #fff; border: 1px solid #d8dadc; }
                </style>
                <ui-icon name="check" w="14"></ui-icon>`
        }
    }
)

customElements.define('side-panel',
    class extends HTMLElement {
        constructor () {
            super()
            this.attachShadow({ mode: 'open' }).innerHTML = `
                <style>
                    :host { display: flex; flex-direction: column; width: 293px; flex: none; background: #fff; position: relative; overflow: hidden; }
                    .trig { height: 75px; box-sizing: border-box; background: #f1f3f5; border-bottom: 1px solid #e6e8ea; padding: 8px 0 0 21px; }
                    .title { display: flex; align-items: center; height: 20px; font-size: 14.500px; color: #666; }
                    .title i { margin-left: auto; width: 0; height: 0; border: 4px solid transparent; border-top-color: #bbb; border-bottom: 0; }
                    .title .rs { margin: 0 21px 0 10px; }
                    .title .pin { position: absolute; right: 0; }
                    .tools { display: flex; gap: 2px; margin-top: 8px; position: relative; }
                    .tools .cut { position: absolute; right: 0; top: 0; }
                    .blank { height: 121px; }
                    .lhead { height: 40px; box-sizing: border-box; background: #f1f3f5; border-bottom: 1px solid #e4e6e8; padding: 9px 0 0 21px; }
                    .layers { flex: 1; display: flex; flex-direction: column; justify-content: flex-end; }
                    .sel { display: flex; align-items: center; height: 29px; margin: 0 6px 0 5px; padding-left: 16px; background: #1a7fd0; color: #fff; font-size: 10.500px; }
                    .sel .n { margin-left: 55px; }
                    .sel ui-icon { margin-left: auto; margin-right: 20px; }
                    .sel check-box { border: 0; }
                    .rule { height: 2px; margin: 4px 22px 0 21px; background: #eceef0; }
                    .base { margin: 4px 0 0 21px; font-size: 11px; line-height: 15px; font-weight: 600; color: #777; }
                    .row { display: flex; align-items: center; height: 21px; margin: 10px 0 10px 21px; font-size: 10.500px; color: #777; }
                    .mini { display: flex; justify-content: space-between; align-items: flex-start; box-sizing: border-box; width: 30px; height: 21px; margin: 0 13px 0 13px; padding: 5px 2px 0; background: #fff; border: 1px solid #d4d6d8; }
                    .mini i { width: 5px; height: 2px; background: #4a78b8; }
                    .foot { display: flex; align-items: center; gap: 2px; height: 41px; box-sizing: border-box; padding-left: 21px; background: #f2f3f5; border-top: 1px solid #e4e6e8; font-size: 10.500px; color: #777; }
                    .foot check-box { margin: 0 5px; }
                    .bar { position: absolute; right: 0; top: 253px; bottom: 110px; width: 6px; background: #b9b9b9; clip-path: polygon(0 0, 100% 10px, 100% 100%, 0 100%); }
                    .strip { position: absolute; right: 0; top: 405px; bottom: 0; width: 5px; background: #eceef0; border-left: 1px solid #dcdee0; }
                </style>
                <div class="trig">
                    <div class="title">Triggers<i></i><ui-icon class="rs" name="restore" w="12"></ui-icon></div>
                    <div class="tools">
                        <tool-btn icon="doc"></tool-btn>
                        <tool-btn icon="edit" off></tool-btn>
                        <tool-btn icon="copy" off></tool-btn>
                        <tool-btn icon="paste" off></tool-btn>
                        <tool-btn icon="trash" off></tool-btn>
                        <tool-btn icon="arrowUp" off></tool-btn>
                        <tool-btn icon="arrowDown" off></tool-btn>
                        <tool-btn icon="vars" style="margin-left:29px"></tool-btn>
                        <ui-icon class="cut" name="cut"></ui-icon>
                    </div>
                </div>
                <div class="blank"></div>
                <div class="lhead">
                    <div class="title">Slide Layers<i></i><ui-icon class="rs" name="restore" w="12"></ui-icon><ui-icon class="pin" name="pin"></ui-icon></div>
                </div>
                <div class="layers">
                    <div class="sel"><check-box></check-box><span class="n">Untitled Layer 1</span><ui-icon name="gear" w="15"></ui-icon></div>
                    <div class="rule"></div>
                    <div class="base">Base Layer</div>
                    <div class="row"><check-box></check-box><span class="mini"><i></i><i></i><i></i><i></i></span>Untitled Slide</div>
                </div>
                <div class="foot">
                    <tool-btn icon="doc"></tool-btn>
                    <tool-btn icon="dup"></tool-btn>
                    <tool-btn icon="copyOn"></tool-btn>
                    <tool-btn icon="paste" off></tool-btn>
                    <tool-btn icon="trashOn"></tool-btn>
                    <check-box></check-box>Dim
                </div>
                <span class="bar"></span>
                <span class="strip"></span>`
        }
    }
)

customElements.define('status-bar',
    class extends HTMLElement {
        constructor () {
            super()
            this.attachShadow({ mode: 'open' }).innerHTML = `
                <style>
                    :host { display: flex; align-items: center; height: 31px; flex: none; box-sizing: border-box; padding: 0 0 3px 7px; background: #303034; color: #b0b0b0; font-size: 10.500px; }
                    .clean { margin-left: 15px; }
                    .right { display: flex; align-items: center; margin-left: auto; padding-right: 8px; }
                    .act { display: flex; align-items: center; justify-content: center; width: 21px; height: 21px; background: #28282b; margin: 0 7px; }
                    .pct { margin: 0 10px 0 7px; color: #9a9a9a; font-size: 11px; }
                    .sign { color: #d8d8d8; font-size: 14px; line-height: 14px; }
                    .slider { position: relative; width: 94px; height: 1px; background: #dcdcdc; margin: 0 6px 0 3px; }
                    .slider i { position: absolute; left: 20px; top: -3px; box-sizing: border-box; width: 7px; height: 7px; border-radius: 50%; background: #303034; border: 1px solid #e0e0e0; }
                    .slider b { position: absolute; left: 48px; top: -3px; width: 1px; height: 7px; background: #dcdcdc; }
                </style>
                <span>Slide 1 of 1</span><span class="clean">"Clean"</span>
                <div class="right">
                    <ui-icon name="gridView" w="12"></ui-icon>
                    <span class="act"><ui-icon name="slideView" w="12"></ui-icon></span>
                    <ui-icon name="present" w="13"></ui-icon>
                    <span class="pct">52%</span>
                    <span class="sign">−</span>
                    <span class="slider"><i></i><b></b></span>
                    <span class="sign">+</span>
                    <ui-icon name="fit" style="margin-left:4px"></ui-icon>
                </div>`
        }
    }
)

customElements.define('task-bar',
    class extends HTMLElement {
        constructor () {
            super()
            this.attachShadow({ mode: 'open' }).innerHTML = `
                <style>
                    :host { display: flex; align-items: center; height: 41px; flex: none; box-sizing: border-box; padding-left: 2px; background: #d4d0c8; border-top: 1px solid #f0eee8; }
                    .tray { display: flex; align-items: center; box-sizing: border-box; width: 162px; height: 34px; margin-left: auto; padding-left: 4px; border: 1px solid; border-color: #808080 #fff #fff #808080; font-size: 10px; color: #222; }
                    .clock { margin-left: 9px; text-align: center; line-height: 16px; color: #333; }
                    .tray ui-icon { margin-left: 8px; }
                    .tray .chev { margin-left: 0; }
                </style>
                <slot></slot>
                <div class="tray">
                    <ui-icon class="chev" name="chevrons"></ui-icon>
                    <ui-icon name="plug" w="15"></ui-icon>
                    <ui-icon name="signal" w="15"></ui-icon>
                    <ui-icon name="speaker" w="12"></ui-icon>
                    <div class="clock">5:43 PM<br>12/1/2016</div>
                    <ui-icon name="desktop" w="13" style="margin-left:6px"></ui-icon>
                </div>`
        }
    }
)

customElements.define('task-item',
    class extends HTMLElement {
        constructor () {
            super()
            const icon = this.getAttribute('icon')
            const active = this.hasAttribute('active')
            const start = this.hasAttribute('start')
            const size = Number(this.getAttribute('size')) || 28
            this.attachShadow({ mode: 'open' }).innerHTML = `
                <style>
                    :host { display: flex; align-items: center; flex: none; box-sizing: border-box; width: ${this.getAttribute('w')}px; height: 34px; margin-left: ${this.getAttribute('gap') || 0}px; padding-left: ${this.getAttribute('pad') || 1}px; overflow: hidden; white-space: nowrap; font-size: 10px; color: #222; border: 1px solid; font-family: "Noto Sans", "Open Sans", sans-serif;
                        border-color: ${active ? '#666 #fff #fff #666' : '#fff #555 #555 #fff'}; background: ${active ? '#fff' : '#d4d0c8'}; font-weight: ${active || start ? 700 : 400}; }
                    span { margin-left: ${this.getAttribute('tx') || 1}px; }
                </style>
                ${start ? '<ui-icon name="startFlag"></ui-icon>' : `<ui-icon name="${icon}" h="${size}" w="${ICONS[icon][0] * size / ICONS[icon][1]}"></ui-icon>`}
                <span><slot></slot></span>`
        }
    }
)
</script>
</body>
</html>
